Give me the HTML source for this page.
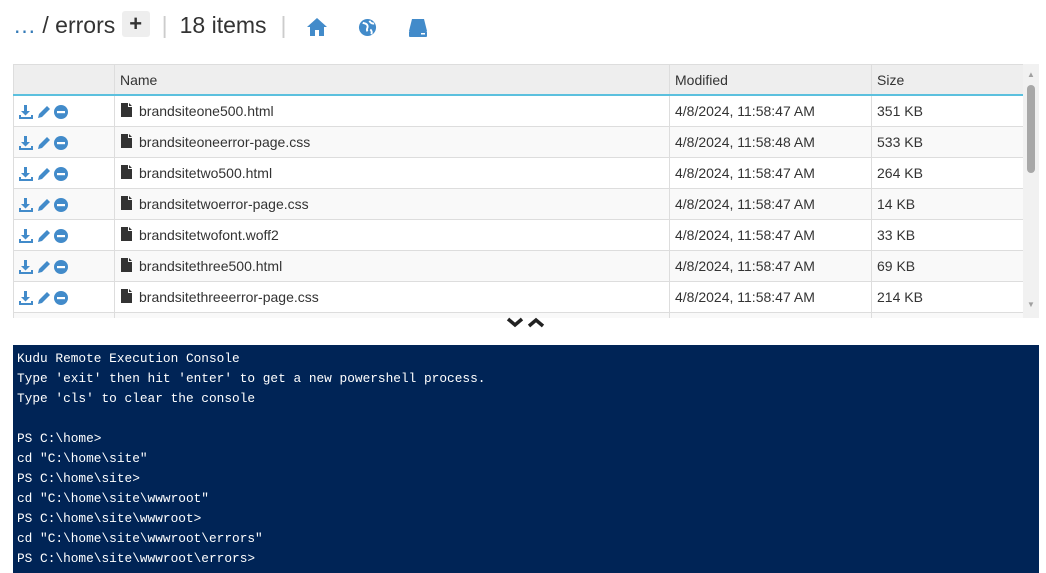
<!DOCTYPE html>
<html><head><style>
body{margin:0;width:1046px;height:573px;overflow:hidden;background:#fff;font-family:"Liberation Sans",sans-serif;position:relative}
.top{position:absolute;left:13px;top:11px;font-size:23px;color:#333;white-space:nowrap}
.abs{position:absolute}
table{border-collapse:collapse;font-size:14px;color:#333}
td,th{border:1px solid #ddd;height:30px;padding:0 0 0 5px;text-align:left;font-weight:normal;white-space:nowrap}
th{background:#eee;border-bottom:2px solid #5bc0de;height:29px}
tr:nth-child(odd) td{background:#f9f9f9}
.con{position:absolute;left:13px;top:345px;width:1026px;height:228px;background:#002456;color:#fff;font-family:"Liberation Mono",monospace;font-size:12.8px;line-height:20px;padding:4px 0 0 4px;box-sizing:border-box;white-space:pre}
</style></head><body>
<div class="top"><span style="color:#337ab7">…</span> / errors <span style="display:inline-block;background:#eee;border-radius:3px;width:28px;height:26px;text-align:center;line-height:26px;font-weight:bold;font-size:22px;vertical-align:2px">+</span><span style="color:#ccc;margin:0 12px 0 12px">|</span>18 items<span style="color:#ccc;margin:0 0 0 14px">|</span></div>
<svg class="abs" style="left:306px;top:17px" width="22" height="20" viewBox="0 0 22 20"><path d="M11 1L1 10h3v9h5v-6h4v6h5v-9h3z" fill="#428bca"/></svg>
<svg class="abs" style="left:358px;top:18px" width="19" height="19" viewBox="0 0 20 20"><circle cx="10" cy="10" r="9" fill="#428bca"/><path d="M5 5c2 1 4 0 5 3s-2 3 0 6M12 3c1 2 3 3 5 3M13 12c1 1 2 3 1 5" stroke="#fff" stroke-width="2" fill="none"/></svg>
<svg class="abs" style="left:408px;top:18px" width="20" height="19" viewBox="0 0 20 19"><path d="M4 1h12l3 12H1z" fill="#428bca"/><rect x="1" y="13" width="18" height="6" rx="1" fill="#428bca"/><rect x="13" y="15" width="4" height="1.5" fill="#fff"/></svg>
<div class="abs" style="left:13px;top:64px;width:1010px;height:254px;overflow:hidden">
<table style="width:1011px">
<tr><th style="width:95px"></th><th style="width:549px">Name</th><th style="width:196px">Modified</th><th>Size</th></tr>
<tr><td>ICON</td><td>F brandsiteone500.html</td><td>4/8/2024, 11:58:47 AM</td><td>351 KB</td></tr>
<tr><td>ICON</td><td>F brandsiteoneerror-page.css</td><td>4/8/2024, 11:58:48 AM</td><td>533 KB</td></tr>
<tr><td>ICON</td><td>F brandsitetwo500.html</td><td>4/8/2024, 11:58:47 AM</td><td>264 KB</td></tr>
<tr><td>ICON</td><td>F brandsitetwoerror-page.css</td><td>4/8/2024, 11:58:47 AM</td><td>14 KB</td></tr>
<tr><td>ICON</td><td>F brandsitetwofont.woff2</td><td>4/8/2024, 11:58:47 AM</td><td>33 KB</td></tr>
<tr><td>ICON</td><td>F brandsitethree500.html</td><td>4/8/2024, 11:58:47 AM</td><td>69 KB</td></tr>
<tr><td>ICON</td><td>F brandsitethreeerror-page.css</td><td>4/8/2024, 11:58:47 AM</td><td>214 KB</td></tr>
<tr><td></td><td></td><td></td><td></td></tr>
</table></div>
<div class="abs" style="left:1023px;top:64px;width:16px;height:254px;background:#f1f1f1"></div>
<div class="abs" style="left:1027px;top:85px;width:8px;height:88px;background:#a8a8a8;border-radius:4px"></div>
<div class="abs" style="left:1027px;top:70px;font-size:8px;color:#a0a0a0">▲</div>
<div class="abs" style="left:1027px;top:300px;font-size:8px;color:#a0a0a0">▼</div>
<svg class="abs" style="left:506px;top:316px" width="40" height="12" viewBox="0 0 40 12"><path d="M2 3l7 6 7-6" stroke="#222" stroke-width="3.5" fill="none"/><path d="M23 10l7-6 7 6" stroke="#222" stroke-width="3.5" fill="none"/></svg>
<div class="con">Kudu Remote Execution Console
Type 'exit' then hit 'enter' to get a new powershell process.
Type 'cls' to clear the console

PS C:\home>
cd "C:\home\site"
PS C:\home\site>
cd "C:\home\site\wwwroot"
PS C:\home\site\wwwroot>
cd "C:\home\site\wwwroot\errors"
PS C:\home\site\wwwroot\errors></div>
<script>
var ic='<svg width="56" height="16" viewBox="0 0 56 16" style="vertical-align:middle;margin-left:-1px"><path d="M6 1h3v6h3l-4.5 4.5L3 7h3z M1 11h2v2h10v-2h2v4H1z" fill="#428bca"/><path d="M20 14l1-4 8-8 3 3-8 8z" fill="#428bca"/><circle cx="43" cy="8" r="7" fill="#428bca"/><rect x="39" y="7" width="8" height="2.2" fill="#fff"/></svg>';
var fi='<svg width="11" height="14" viewBox="0 0 11 14" style="vertical-align:-1px;margin-right:7px;margin-left:1px"><path d="M0 0h7v4h4v10H0zM8 0l3 3H8z" fill="#333"/></svg>';
document.querySelectorAll('td').forEach(function(t){if(t.textContent=='ICON')t.innerHTML=ic;else if(t.textContent.indexOf('F ')==0)t.innerHTML=fi+t.textContent.slice(2);});
</script>
</body></html>
